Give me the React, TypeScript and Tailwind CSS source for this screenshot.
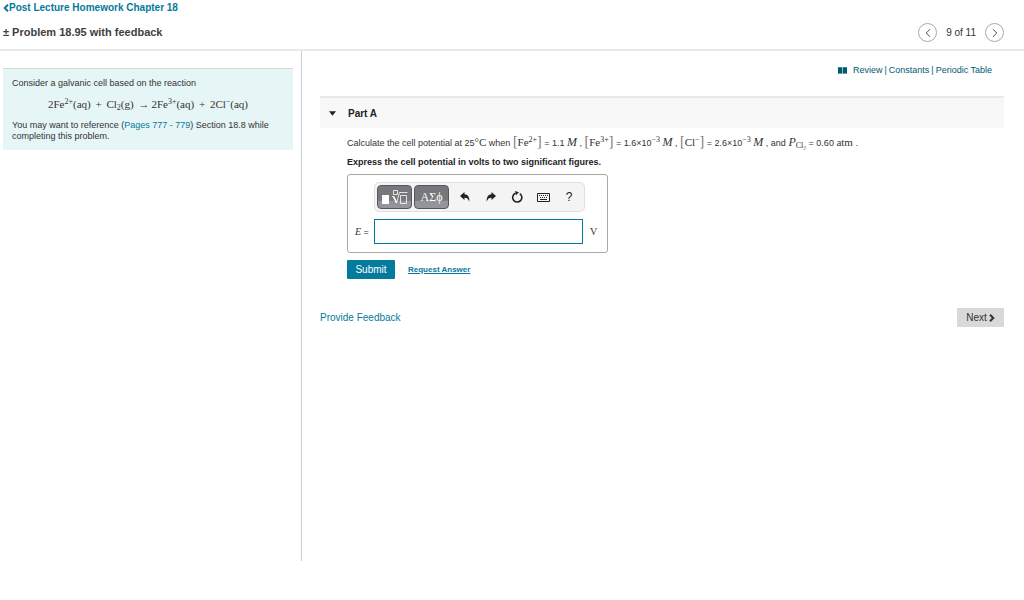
import { useState } from 'react'
import type { ReactNode } from 'react'
import { ChevronLeft, ChevronRight } from 'lucide-react'

const resources = ['Review', 'Constants', 'Periodic Table']

export default function App() {
  const [open, setOpen] = useState(true)
  const [answer, setAnswer] = useState('')

  return (
    <div className="bg-white font-['Liberation_Sans',Arial,sans-serif] text-[9px] leading-[11px] text-[#333]">
      <header className="flex items-end justify-between border-b-2 border-[#e9e9e9] pt-[2px] pr-5 pb-[7px] pl-[3px]">
        <div className="flex flex-col gap-3 pb-1">
          <a href="#assignment" className="flex items-center text-[10px] leading-3 font-bold text-[#047a9c]">
            <BoldChevron className="-scale-x-100" />Post Lecture Homework Chapter 18
          </a>
          <h1 className="text-[11px] leading-3 font-bold text-[#404040]">± Problem 18.95 with feedback</h1>
        </div>
        <nav className="flex items-center gap-[9px] text-[10px]">
          <button type="button" aria-label="Previous item" className="flex size-[19px] items-center justify-center rounded-full border border-[#aaa]">
            <ChevronLeft size={14} strokeWidth={1.5} />
          </button>
          <span>9 of 11</span>
          <button type="button" aria-label="Next item" className="flex size-[19px] items-center justify-center rounded-full border border-[#aaa]">
            <ChevronRight size={14} strokeWidth={1.5} />
          </button>
        </nav>
      </header>

      <div className="flex">
        <aside className="min-h-[510px] w-[302px] shrink-0 border-r border-[#c7d0d8] pt-[17px] pr-2 pl-[3px]">
          <div className="border-t border-[#d0dada] bg-[#e6f6f6] px-[9px] pt-[9px] pb-2">
            <p>Consider a galvanic cell based on the reaction</p>
            <p className="my-2 text-center font-['Liberation_Serif',serif] text-[11px] leading-[15px] whitespace-nowrap">
              2Fe<Sup>2+</Sup>(aq) <Op>+</Op> Cl<Sub>2</Sub>(g) <Op>→</Op>2Fe<Sup>3+</Sup>(aq) <Op>+</Op> 2Cl<Sup>−</Sup>(aq)
            </p>
            <p>
              You may want to reference (<a href="#pages" className="text-[#047a9c]">Pages 777 - 779</a>) Section 18.8 while
              <br />
              completing this problem.
            </p>
          </div>
        </aside>

        <main className="min-w-0 flex-1 pt-[11px] pr-5 pl-[18px]">
          <div className="flex items-center justify-end gap-[2px] pr-3 leading-4 text-[#005a70]">
            <BookIcon />
            {resources.map((name, i) => (
              <span key={name} className="flex gap-[2px]">
                {i > 0 && <span>|</span>}
                <a href={`#${name}`}>{name}</a>
              </span>
            ))}
          </div>

          <section className="mt-[18px]">
            <h2 className="border-t-2 border-[#e9e9e9] bg-[#f8f8f8] text-[10px] font-bold text-[#222]">
              <button type="button" aria-expanded={open} onClick={() => setOpen(!open)} className="flex h-[30px] w-full items-center gap-3 pl-[9px]">
                <svg width="7" height="5" viewBox="0 0 8 5" aria-hidden="true"><path d="M0 0h8L4 5z" fill="currentColor" /></svg>
                Part A
              </button>
            </h2>

            {open && (
              <div className="pl-[27px]">
                <p className="pt-[6px] leading-4">
                  Calculate the cell potential at 25<Tex>°C</Tex> when <Conc>Fe<Sup>2+</Sup></Conc> = 1.1 <Var>M</Var> ,{' '}
                  <Conc>Fe<Sup>3+</Sup></Conc> = 1.6×10<Sup>−3</Sup> <Var>M</Var> ,{' '}
                  <Conc>Cl<Sup>−</Sup></Conc> = 2.6×10<Sup>−3</Sup> <Var>M</Var> , and{' '}
                  <Var>P</Var><Sub>Cl₂</Sub> = 0.60 <Tex>atm</Tex> .
                </p>
                <p className="mt-[6px] font-bold text-[#222]">Express the cell potential in volts to two significant figures.</p>

                <form onSubmit={(e) => e.preventDefault()}>
                  <div className="mt-[6px] w-[261px] rounded-[3px] border border-[#a8a8a8] px-[7px] pt-[7px] pb-2">
                    <div className="ml-[19px] flex h-[30px] w-[211px] items-center rounded-[5px] border border-[#e0e0e0] bg-[#f4f4f4] pl-[2px] text-[#222]">
                      <button type="button" aria-label="Templates" className="flex h-6 w-[35px] items-center justify-center rounded-[4px] border border-[#55555b] bg-linear-to-b from-[#77777c] from-65% to-[#94949c] to-70% text-white">
                        <TemplateIcon />
                      </button>
                      <button type="button" aria-label="Symbols" className="ml-[2px] flex h-6 w-[35px] items-center justify-center rounded-[4px] border border-[#55555b] bg-linear-to-b from-[#77777c] from-65% to-[#94949c] to-70% font-['Liberation_Serif',serif] text-[12px] text-white">
                        ΑΣϕ
                      </button>
                      <div className="ml-[3px] flex flex-1 items-center">
                        <Tool label="Undo"><ArrowIcon /></Tool>
                        <Tool label="Redo"><ArrowIcon className="-scale-x-100" /></Tool>
                        <Tool label="Reset"><ResetIcon /></Tool>
                        <Tool label="Keyboard shortcuts"><KeyboardIcon /></Tool>
                        <Tool label="Help"><span className="text-[12px]">?</span></Tool>
                      </div>
                    </div>
                    <div className="mt-[7px] flex items-center">
                      <label htmlFor="answer" className="w-[19px] whitespace-nowrap"><i className="font-['Liberation_Serif',serif] text-[10px]">E</i> =</label>
                      <input
                        id="answer"
                        value={answer}
                        onChange={(e) => setAnswer(e.target.value)}
                        className="h-[25px] w-[209px] border border-[#047a9c] px-1 text-[11px] outline-none"
                      />
                      <span className="ml-[7px] font-['Liberation_Serif',serif] text-[10px]">V</span>
                    </div>
                  </div>
                  <div className="mt-[7px] flex items-center gap-[13px]">
                    <button type="submit" className="h-[19px] w-12 rounded-[1px] bg-[#047a9c] text-[10px] text-white">Submit</button>
                    <a href="#answer" className="text-[8px] font-bold text-[#047a9c] underline">Request Answer</a>
                  </div>
                </form>
              </div>
            )}
          </section>

          <footer className="mt-[29px] flex items-center justify-between text-[10px]">
            <a href="#feedback" className="text-[#047a9c]">Provide Feedback</a>
            <button type="button" className="flex h-[19px] w-[47px] items-center justify-center gap-[2px] rounded-[1px] bg-[#d9d9d9]">
              Next <BoldChevron />
            </button>
          </footer>
        </main>
      </div>
    </div>
  )
}

function Tex({ children }: { children: ReactNode }) {
  return <span className="font-['Liberation_Serif',serif] text-[11px]">{children}</span>
}

function Var({ children }: { children: ReactNode }) {
  return <i className="font-['Liberation_Serif',serif] text-[12px] leading-none">{children}</i>
}

function Op({ children }: { children: ReactNode }) {
  return <span className="mx-[2px]">{children}</span>
}

function Sup({ children }: { children: ReactNode }) {
  return <sup className="font-['Liberation_Serif',serif] text-[8px]">{children}</sup>
}

function Sub({ children }: { children: ReactNode }) {
  return <sub className="font-['Liberation_Serif',serif] text-[8px]">{children}</sub>
}

function Conc({ children }: { children: ReactNode }) {
  return (
    <Tex>
      <span className="text-[14px] leading-none text-[#777]">[</span>{children}<span className="text-[14px] leading-none text-[#777]">]</span>
    </Tex>
  )
}

function Tool({ label, children }: { label: string; children: ReactNode }) {
  return <button type="button" aria-label={label} className="flex h-6 w-[26px] items-center justify-center">{children}</button>
}

function BoldChevron({ className }: { className?: string }) {
  return (
    <svg width="6" height="8" viewBox="0 0 6 8" fill="none" stroke="currentColor" strokeWidth="2" className={className} aria-hidden="true">
      <path d="M1 .7L4.300 4L1 7.300" />
    </svg>
  )
}

function BookIcon() {
  return (
    <svg width="9" height="7" viewBox="0 0 9 7" fill="currentColor" className="mr-1" aria-hidden="true">
      <path d="M0 .3Q2 0 4.200 .3v6.400Q2 6.200 0 6.700zM4.800 .3Q7 0 9 .3v6.400Q7 6.200 4.800 6.700z" />
    </svg>
  )
}

function TemplateIcon() {
  return (
    <svg width="28" height="16" viewBox="0 0 28 16" fill="none" stroke="currentColor" aria-hidden="true">
      <path d="M1 6h7v9H1z" fill="currentColor" stroke="none" />
      <path d="M12.500 1.500h4v4h-4zM19.500 6.500h6v8h-6z" strokeWidth=".8" />
      <path d="M11 7.500h1.500l3 6.500 3-10.500h8" strokeWidth=".8" />
      <path d="M12.500 7.500l3 6" strokeWidth="1.500" />
    </svg>
  )
}

function ArrowIcon({ className }: { className?: string }) {
  return (
    <svg width="10" height="10" viewBox="0 0 10 10" fill="currentColor" className={className} aria-hidden="true">
      <path d="M0 4L4.500 0v2.300Q9.800 2.500 9.300 10Q8.500 5.700 4.500 5.700V8z" />
    </svg>
  )
}

function ResetIcon() {
  return (
    <svg width="12" height="12" viewBox="0 0 12 12" fill="none" stroke="currentColor" strokeWidth="1.600" aria-hidden="true">
      <path d="M8.800 2.600A4.600 4.600 0 1 1 4.500 2.200" />
      <path d="M4 0l4 1.200L5 4.200z" fill="currentColor" stroke="none" />
    </svg>
  )
}

function KeyboardIcon() {
  return (
    <svg width="13" height="9" viewBox="0 0 13 9" fill="none" stroke="currentColor" aria-hidden="true">
      <path d="M.5.5h12v8H.5z" />
      <path d="M2 2.500h9M3 4.500h8" strokeDasharray="1 1" />
      <path d="M3 6.500h7" />
    </svg>
  )
}
